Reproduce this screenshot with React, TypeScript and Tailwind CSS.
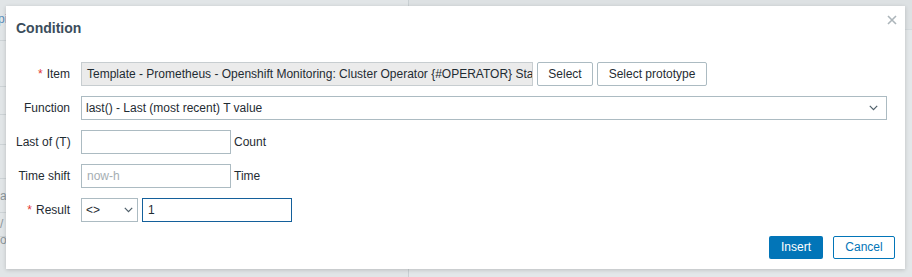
import React from "react";

const Chevron = ({ className = "" }: { className?: string }) => (
  <svg width="9" height="6" viewBox="0 0 9 6" className={className}>
    <polyline points="0.8,0.8 4.5,4.6 8.2,0.8" fill="none" stroke="#4f5f6a" strokeWidth="1.2" />
  </svg>
);

const Label = ({ text, req }: { text: string; req?: boolean }) => (
  <div className="w-[54px] shrink-0 text-right whitespace-nowrap leading-[24px] text-[12px] text-[#1f2c33]">
    {req && <span className="text-[#e33734] mr-[4px]">*</span>}
    {text}
  </div>
);

export default function App() {
  return (
    <div
      className="relative w-[912px] h-[277px] overflow-hidden bg-[#e1e5e7]"
      style={{ fontFamily: '"Liberation Sans", Arial, sans-serif' }}
    >
      {/* dimmed page behind */}
      <div className="flex h-full">
        <div className="w-[409px] h-full flex flex-col border-r border-[#c9d0d3]">
          <div className="h-[41px] border-b border-[#cdd3d6] pt-[11px] text-[12px] text-[#5a8fbd] leading-[16px] -ml-[2px]">pi</div>
          <div className="h-[46px] border-b border-[#cdd3d6]"></div>
          <div className="h-[28px] border-b border-[#cdd3d6]"></div>
          <div className="h-[30px] border-b border-[#cdd3d6]"></div>
          <div className="h-[34px] border-b border-[#cdd3d6]"></div>
          <div className="h-[34px] border-b border-[#cdd3d6] pt-[10px] text-[12px] text-[#8c969b] leading-[14px]">a</div>
          <div className="h-[24px] border-b border-[#cdd3d6] pt-[4px] text-[12px] text-[#8c969b] leading-[14px]">/</div>
          <div className="flex-1 text-[12px] text-[#8c969b] leading-[14px] -mt-[4px]">o</div>
        </div>
        <div className="flex-1 h-full flex flex-col">
          <div className="h-[30px] bg-[#dde1e3] border-b border-[#d3d9dc]"></div>
          <div className="flex-1 bg-[#e3e7e9]"></div>
        </div>
      </div>

      {/* dialog */}
      <div className="absolute left-[6px] top-[6px] w-[899px] h-[263px] bg-white shadow-[0_1px_4px_rgba(0,0,0,0.18)] px-[10px] pt-[14px] pb-[11px] flex flex-col text-[12px] text-[#1f2c33]">
        <div className="h-[16px] leading-[16px] text-[14px] font-bold text-[#3b4d5c]">Condition</div>
        <svg width="10" height="10" viewBox="0 0 10 10" className="absolute right-[8px] top-[9px]">
          <path d="M1 1 L9 9 M9 1 L1 9" stroke="#acb5ba" strokeWidth="1.6" fill="none" />
        </svg>

        <div className="mt-[26px] flex flex-col gap-[10px]">
          {/* Item */}
          <div className="flex items-center gap-[11px] h-[24px]">
            <Label text="Item" req />
            <div className="flex gap-[4px]">
              <div className="w-[452px] h-[24px] border border-[#c7cdd0] bg-[#ebebeb] px-[5px] leading-[22px] whitespace-nowrap overflow-hidden">
                Template - Prometheus - Openshift Monitoring: Cluster Operator {"{#OPERATOR}"} Status
              </div>
              <div className="w-[56px] h-[24px] border border-[#acbbc2] rounded-[2px] bg-white text-center leading-[22px]">Select</div>
              <div className="w-[110px] h-[24px] border border-[#acbbc2] rounded-[2px] bg-white text-center leading-[22px]">Select prototype</div>
            </div>
          </div>
          {/* Function */}
          <div className="flex items-center gap-[11px] h-[24px]">
            <Label text="Function" />
            <div className="w-[806px] h-[24px] border border-[#acbbc2] bg-white pl-[4px] pr-[8px] flex items-center justify-between">
              <span className="leading-[22px]">last() - Last (most recent) T value</span>
              <Chevron />
            </div>
          </div>
          {/* Last of */}
          <div className="flex items-center gap-[11px] h-[24px]">
            <Label text="Last of (T)" />
            <div className="flex items-center gap-[3px]">
              <div className="w-[150px] h-[24px] border border-[#acbbc2] bg-white"></div>
              <span>Count</span>
            </div>
          </div>
          {/* Time shift */}
          <div className="flex items-center gap-[11px] h-[24px]">
            <Label text="Time shift" />
            <div className="flex items-center gap-[3px]">
              <div className="w-[150px] h-[24px] border border-[#acbbc2] bg-white px-[5px] leading-[22px] text-[#a5aeb3]">now-h</div>
              <span>Time</span>
            </div>
          </div>
          {/* Result */}
          <div className="flex items-center gap-[11px] h-[24px]">
            <Label text="Result" req />
            <div className="flex items-center gap-[4px]">
              <div className="w-[57px] h-[24px] border border-[#acbbc2] bg-white pl-[4px] pr-[4px] flex items-center justify-between">
                <span className="leading-[22px]">&lt;&gt;</span>
                <Chevron />
              </div>
              <div className="w-[150px] h-[24px] border border-[#14609b] bg-white px-[5px] leading-[22px]">1</div>
            </div>
          </div>
        </div>

        <div className="mt-[14px] flex justify-end gap-[10px]">
          <div className="w-[54px] h-[23px] rounded-[2px] bg-[#0275b8] text-white text-center leading-[23px]">Insert</div>
          <div className="w-[62px] h-[23px] rounded-[2px] border border-[#0275b8] bg-white text-[#0275b8] text-center leading-[21px]">Cancel</div>
        </div>
      </div>
    </div>
  );
}
